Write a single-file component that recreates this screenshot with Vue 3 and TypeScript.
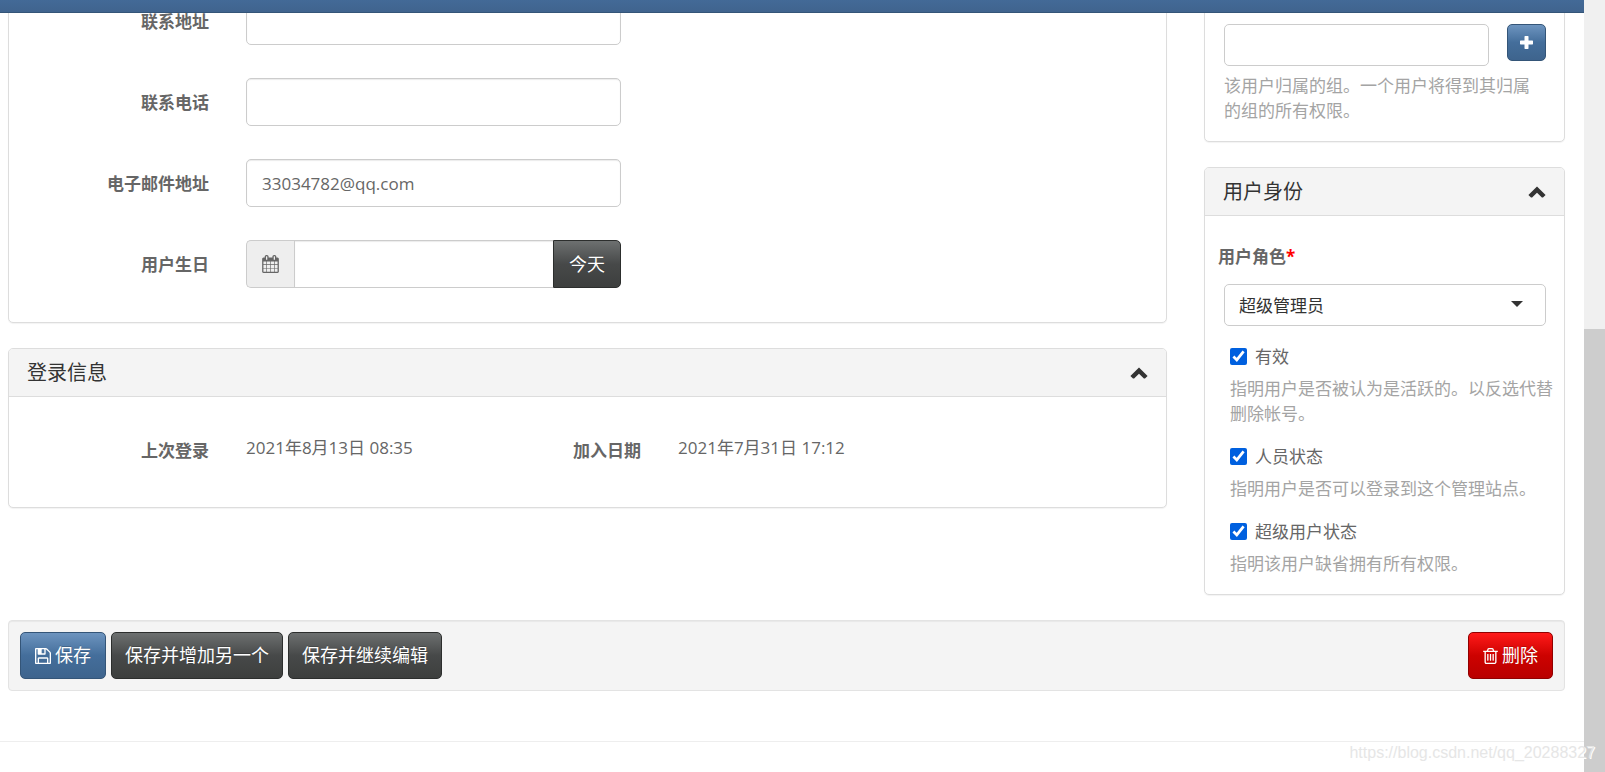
<script setup lang="ts">
import { reactive, ref } from 'vue'

interface Field {
  id: string
  label: string
  type: string
}

interface Flag {
  id: string
  label: string
  help: string
}

const fields: Field[] = [
  { id: 'address', label: '联系地址', type: 'text' },
  { id: 'phone', label: '联系电话', type: 'tel' },
  { id: 'email', label: '电子邮件地址', type: 'email' },
]

const values = reactive<Record<string, string>>({
  address: '',
  phone: '',
  email: '33034782@qq.com',
})

const birthday = ref('')
const groups = ref('')
const role = ref('超级管理员')

const flags: Flag[] = [
  { id: 'active', label: '有效', help: '指明用户是否被认为是活跃的。以反选代替删除帐号。' },
  { id: 'staff', label: '人员状态', help: '指明用户是否可以登录到这个管理站点。' },
  { id: 'superuser', label: '超级用户状态', help: '指明该用户缺省拥有所有权限。' },
]

const checked = reactive<Record<string, boolean>>({ active: true, staff: true, superuser: true })
const loginOpen = ref(true)
const identityOpen = ref(true)

function setToday(): void {
  birthday.value = new Date().toISOString().slice(0, 10)
}
</script>

<template>
  <div class="window">
    <div class="page">
      <header class="navbar"></header>
      <form class="content" @submit.prevent>
        <div class="columns">
          <div class="main-col">
            <section class="panel basics">
              <div v-for="f in fields" :key="f.id" class="form-row">
                <label :for="f.id">{{ f.label }}</label>
                <input :id="f.id" v-model="values[f.id]" class="text-input" :type="f.type" />
              </div>
              <div class="form-row">
                <label for="birthday">用户生日</label>
                <div class="date-group">
                  <span class="addon">
                    <svg viewBox="64 0 1664 1792" width="17" height="18" aria-hidden="true">
                      <path d="M192 1664h288v-288h-288v288zm352 0h320v-288h-320v288zm-352-352h288v-320h-288v320zm352 0h320v-320h-320v320zm-352-384h288v-288h-288v288zm736 736h320v-288h-320v288zm-384-736h320v-288h-320v288zm768 736h288v-288h-288v288zm-384-352h320v-320h-320v320zm-352-864v-288q0-13-9.500-22.500t-22.500-9.500h-64q-13 0-22.500 9.500t-9.500 22.500v288q0 13 9.500 22.500t22.500 9.500h64q13 0 22.500-9.500t9.500-22.500zm736 864h288v-320h-288v320zm-384-384h320v-288h-320v288zm384 0h288v-288h-288v288zm32-480v-288q0-13-9.500-22.500t-22.500-9.500h-64q-13 0-22.500 9.500t-9.500 22.500v288q0 13 9.500 22.500t22.500 9.500h64q13 0 22.500-9.500t9.500-22.500zm384-64v1280q0 52-38 90t-90 38h-1408q-52 0-90-38t-38-90v-1280q0-52 38-90t90-38h128v-96q0-66 47-113t113-47h64q66 0 113 47t47 113v96h384v-96q0-66 47-113t113-47h64q66 0 113 47t47 113v96h128q52 0 90 38t38 90z" />
                    </svg>
                  </span>
                  <input id="birthday" v-model="birthday" class="text-input" type="text" />
                  <button type="button" class="btn btn-dark" @click="setToday">今天</button>
                </div>
              </div>
            </section>

            <section class="panel">
              <div class="panel-heading">
                <h2>登录信息</h2>
                <button type="button" class="toggle" aria-label="折叠" @click="loginOpen = !loginOpen">
                  <svg viewBox="0 0 18 12" width="18" height="12" aria-hidden="true"><path d="M9 0.500L17.600 8.900L15 11.500H13.900L9 6.700L4.100 11.500H3L0.400 8.900Z" /></svg>
                </button>
              </div>
              <dl v-if="loginOpen" class="login-info">
                <dt>上次登录</dt>
                <dd>2021年8月13日 08:35</dd>
                <dt>加入日期</dt>
                <dd>2021年7月31日 17:12</dd>
              </dl>
            </section>
          </div>

          <aside class="side-col">
            <section class="panel groups">
              <div class="group-picker">
                <input v-model="groups" class="text-input" type="text" aria-label="组" />
                <button type="button" class="btn btn-primary add" aria-label="增加组">
                  <svg viewBox="0 0 13 13" width="13" height="13" aria-hidden="true"><path d="M5 0H8L8.500 .5V4.500H12.500L13 5V8L12.500 8.500H8.500V12.500L8 13H5L4.500 12.500V8.500H.5L0 8V5L.5 4.500H4.500V.5Z" /></svg>
                </button>
              </div>
              <p class="help">该用户归属的组。一个用户将得到其归属的组的所有权限。</p>
            </section>

            <section class="panel">
              <div class="panel-heading">
                <h2>用户身份</h2>
                <button type="button" class="toggle" aria-label="折叠" @click="identityOpen = !identityOpen">
                  <svg viewBox="0 0 18 12" width="18" height="12" aria-hidden="true"><path d="M9 0.500L17.600 8.900L15 11.500H13.900L9 6.700L4.100 11.500H3L0.400 8.900Z" /></svg>
                </button>
              </div>
              <div v-if="identityOpen" class="identity">
                <label class="role-label" for="role">用户角色<span class="required">*</span></label>
                <div class="select-box">
                  <select id="role" v-model="role">
                    <option>超级管理员</option>
                  </select>
                  <svg class="caret" viewBox="0 0 12 6" width="12" height="6" aria-hidden="true"><path d="M0 0H12L6 6Z" /></svg>
                </div>
                <div v-for="f in flags" :key="f.id" class="flag">
                  <label :for="f.id">
                    <input :id="f.id" v-model="checked[f.id]" type="checkbox" />
                    <span>{{ f.label }}</span>
                  </label>
                  <p class="help">{{ f.help }}</p>
                </div>
              </div>
            </section>
          </aside>
        </div>

        <div class="actions">
          <button type="submit" class="btn btn-primary">
            <svg viewBox="128 128 1536 1536" width="16" height="16" aria-hidden="true">
              <path d="M512 1536h768v-384h-768v384zm896 0h128v-896q0-14-10-38.500t-20-34.500l-281-281q-10-10-34-20t-39-10v416q0 40-28 68t-68 28h-576q-40 0-68-28t-28-68v-416h-128v1280h128v-416q0-40 28-68t68-28h832q40 0 68 28t28 68v416zm-384-928v-320q0-13-9.500-22.500t-22.500-9.500h-192q-13 0-22.500 9.500t-9.500 22.500v320q0 13 9.500 22.500t22.500 9.500h192q13 0 22.500-9.500t9.500-22.500zm640 32v928q0 40-28 68t-68 28h-1344q-40 0-68-28t-28-68v-1344q0-40 28-68t68-28h928q40 0 88 20t76 48l280 280q28 28 48 76t20 88z" />
            </svg>
            保存
          </button>
          <button type="submit" class="btn btn-dark">保存并增加另一个</button>
          <button type="submit" class="btn btn-dark">保存并继续编辑</button>
          <button type="button" class="btn btn-danger">
            <svg viewBox="192 128 1408 1536" width="15" height="16" aria-hidden="true">
              <path d="M704 736v576q0 14-9 23t-23 9h-64q-14 0-23-9t-9-23v-576q0-14 9-23t23-9h64q14 0 23 9t9 23zm256 0v576q0 14-9 23t-23 9h-64q-14 0-23-9t-9-23v-576q0-14 9-23t23-9h64q14 0 23 9t9 23zm256 0v576q0 14-9 23t-23 9h-64q-14 0-23-9t-9-23v-576q0-14 9-23t23-9h64q14 0 23 9t9 23zm128 724v-948h-896v948q0 22 7 40.500t14.500 27 10.500 8.500h832q3 0 10.500-8.500t14.500-27 7-40.500zm-672-1076h448l-48-117q-7-9-17-11h-317q-10 2-17 11zm928 32v64q0 14-9 23t-23 9h-96v948q0 83-47 143.500t-113 60.500h-832q-66 0-113-58.500t-47-141.500v-952h-96q-14 0-23-9t-9-23v-64q0-14 9-23t23-9h309l70-167q15-37 54-63t79-26h320q40 0 79 26t54 63l70 167h309q14 0 23 9t9 23z" />
            </svg>
            删除
          </button>
        </div>
      </form>
      <hr />
    </div>

    <div class="scrollbar" aria-hidden="true"><div class="thumb"></div></div>
    <div class="watermark">https://blog.csdn.net/qq_20288327</div>
  </div>
</template>

<style>
body {
  margin: 0;
  background: #fff;
}
</style>

<style scoped>
* {
  box-sizing: border-box;
}

.window {
  position: relative;
  display: flex;
  height: 100vh;
  overflow: hidden;
  color: #666;
  font: 17px/25px "Open Sans", "Noto Sans CJK SC", sans-serif;
}

.page {
  position: relative;
  flex: 1;
  min-width: 0;
  overflow: hidden;
}

.navbar {
  position: absolute;
  inset: 0 0 auto;
  z-index: 2;
  height: 13px;
  background: linear-gradient(#436a97, #40648e);
  border-bottom: 1px solid #345578;
}

/* The form is scrolled part of the way under the navbar. */
.content {
  margin-top: -40px;
  padding: 0 19px 0 8px;
}

.columns {
  display: flex;
  align-items: flex-start;
  gap: 37px;
}

.main-col {
  flex: 1159;
  min-width: 0;
}

.side-col {
  flex: 361;
  min-width: 0;
}

.panel {
  margin-bottom: 25px;
  border: 1px solid #ddd;
  border-radius: 5px;
  background: #fff;
  box-shadow: 0 1px 1px rgba(0, 0, 0, 0.05);
}

.panel-heading {
  display: flex;
  align-items: center;
  justify-content: space-between;
  height: 48px;
  padding: 0 18px;
  border-bottom: 1px solid #ddd;
  border-radius: 4px 4px 0 0;
  background: #f4f4f4;
  color: #333;
}

h2 {
  margin: 0;
  font-size: 20px;
  font-weight: 400;
  line-height: 25px;
}

.toggle {
  display: flex;
  padding: 0;
  border: 0;
  background: none;
  color: #333;
}

svg {
  flex: none;
  fill: currentColor;
}

.basics {
  display: grid;
  gap: 33px;
  padding: 36px 0 34px;
}

.form-row {
  display: grid;
  grid-template-columns: 200fr 375fr 508fr;
  column-gap: 37px;
  align-items: center;
}

.form-row > label,
dt {
  font-weight: 700;
  text-align: right;
}

.text-input {
  width: 100%;
  min-width: 0;
  height: 48px;
  padding: 0 15px;
  border: 1px solid #ccc;
  border-radius: 5px;
  background: #fff;
  box-shadow: inset 0 1px 1px rgba(0, 0, 0, 0.08);
  color: #666;
  font: inherit;
}

.date-group {
  display: flex;
  height: 48px;
}

.date-group .text-input {
  flex: 1;
  border-right: 0;
  border-radius: 0;
}

.date-group .btn {
  height: 48px;
  padding: 0 15px;
  border-radius: 0 5px 5px 0;
}

.addon {
  display: flex;
  align-items: center;
  justify-content: center;
  width: 48px;
  border: 1px solid #ccc;
  border-right: 0;
  border-radius: 5px 0 0 5px;
  background: #eee;
}

.login-info {
  display: grid;
  grid-template-columns: 200fr 196fr 162fr 488fr;
  column-gap: 37px;
  margin: 0;
  padding: 38px 0 44px;
}

dt {
  padding-top: 3px;
}

dd {
  margin: 0;
}

.groups {
  padding: 63px 18px 18px 19px;
}

.group-picker {
  display: flex;
  gap: 18px;
  margin-bottom: 7px;
}

.group-picker .text-input {
  flex: 1;
  height: 42px;
  box-shadow: none;
}

.help {
  margin: 0;
  color: #a4a4a4;
}

.btn {
  display: inline-flex;
  align-items: center;
  justify-content: center;
  gap: 4px;
  height: 47px;
  padding: 0 13px;
  border: 1px solid;
  border-radius: 5px;
  color: #fff;
  font: inherit;
  font-size: 18px;
  white-space: nowrap;
  text-shadow: 0 -1px 0 rgba(0, 0, 0, 0.2);
}

.btn-primary {
  padding: 0 14px;
  border-color: #345578;
  background: linear-gradient(#6d94bf, #446e9b 50%, #3e648d);
}

.btn-dark {
  border-color: #2c2e2d;
  background: linear-gradient(#6d7070, #474949 50%, #3d3f3e);
}

.btn-danger {
  margin-left: auto;
  padding: 0 14px;
  border-color: #910000;
  background: linear-gradient(#ff1a1a, #cd0200 50%, #b90000);
}

.add {
  width: 39px;
  height: 37px;
  padding: 0;
}

.identity {
  padding: 28px 18px 18px 19px;
}

.role-label {
  display: block;
  margin: 0 0 15px -6px;
  font-weight: 700;
}

.required {
  color: #f00;
}

.select-box {
  position: relative;
}

select {
  display: block;
  width: 100%;
  height: 42px;
  padding: 0 40px 0 14px;
  border: 1px solid #ccc;
  border-radius: 5px;
  appearance: none;
  background: #fff;
  color: #333;
  font: inherit;
}

.caret {
  position: absolute;
  top: 17px;
  right: 23px;
  color: #333;
  pointer-events: none;
}

.flag {
  margin: 18px -18px 0 6px;
}

.flag label {
  display: flex;
  align-items: center;
  gap: 8px;
  margin-bottom: 7px;
}

.flag input {
  width: 17px;
  height: 17px;
  margin: 0;
  accent-color: #0060df;
}

.actions {
  display: flex;
  gap: 5px;
  padding: 11px;
  border: 1px solid #e3e3e3;
  border-radius: 4px;
  background: #f4f4f4;
  box-shadow: inset 0 1px 1px rgba(0, 0, 0, 0.05);
}

hr {
  height: 1px;
  margin: 50px 0 0;
  border: 0;
  background: #eee;
}

.scrollbar {
  display: flex;
  flex-direction: column;
  justify-content: flex-end;
  width: 21px;
  background: #f0f0f0;
}

.thumb {
  height: 57.4%;
  background: #cdcdcd;
}

.watermark {
  position: absolute;
  right: 10px;
  bottom: 7px;
  z-index: 3;
  color: #e6e6e6;
  font: 16px/25px "Liberation Sans", sans-serif;
  text-shadow: 1px 1px 0 #fff;
}
</style>
